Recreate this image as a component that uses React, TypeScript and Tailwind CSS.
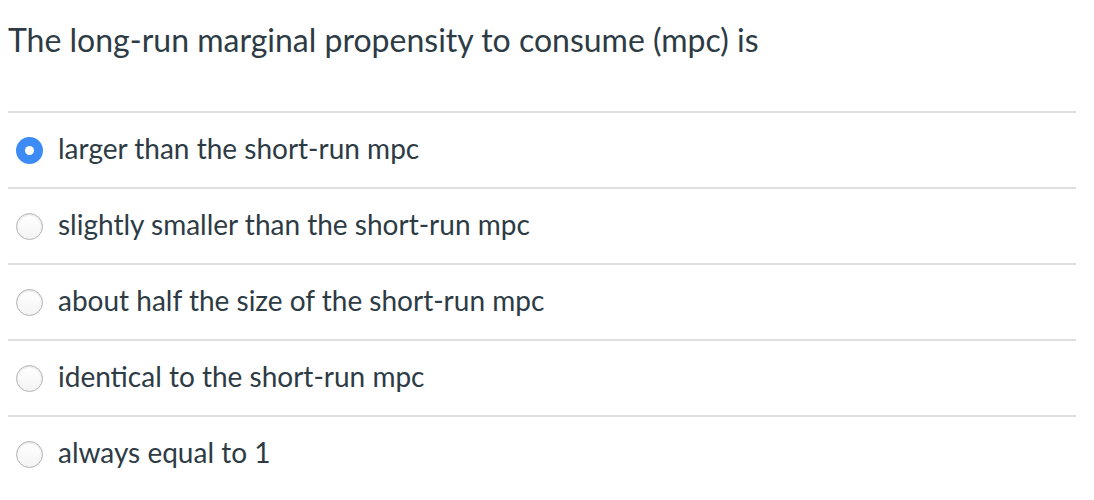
import React from 'react';

const OPTIONS = [
  'larger than the short-run mpc',
  'slightly smaller than the short-run mpc',
  'about half the size of the short-run mpc',
  'identical to the short-run mpc',
  'always equal to 1',
];

function Radio({ checked }: { checked: boolean }) {
  if (checked) {
    return (
      <span className="flex h-[27px] w-[27px] shrink-0 items-center justify-center rounded-full bg-[#3d8bf5]">
        <span className="h-[9px] w-[9px] rounded-full bg-white" />
      </span>
    );
  }
  return (
    <span className="h-[27px] w-[27px] shrink-0 rounded-full border border-[#b4b4b4] bg-gradient-to-b from-white to-[#f4f4f4] shadow-[inset_0_1px_2px_rgba(0,0,0,0.12)]" />
  );
}

export default function App() {
  const selected = 0;
  return (
    <div className="h-[500px] w-[1094px] bg-white font-['Lato','Liberation_Sans',sans-serif] text-[#2d3b45]">
      <div className="pl-[8px] pt-[20px] text-[32px] leading-[40px]">
        The long-run marginal propensity to consume (mpc) is
      </div>
      <div className="mt-[51px] w-[1076px] pl-[8px]">
        {OPTIONS.map((label, i) => (
          <div
            key={label}
            className="flex h-[76px] items-center gap-[15px] border-t-2 border-[#dedede] pl-[8px]"
          >
            <Radio checked={i === selected} />
            <span className="-mt-[4px] text-[28px] leading-[34px]">{label}</span>
          </div>
        ))}
      </div>
    </div>
  );
}
